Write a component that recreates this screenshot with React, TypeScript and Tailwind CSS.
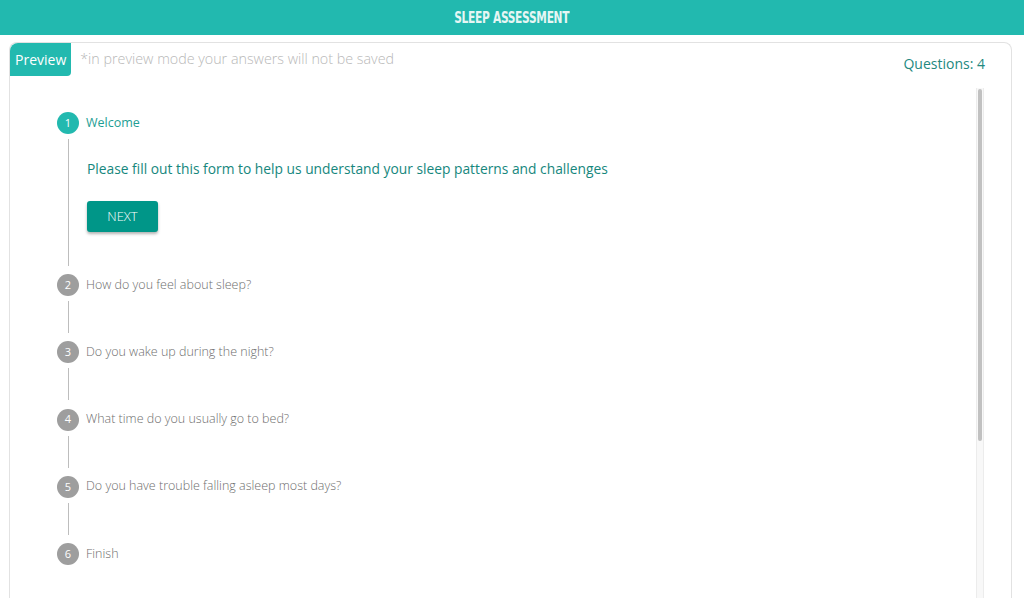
const STEPS = [
  'Welcome',
  'How do you feel about sleep?',
  'Do you wake up during the night?',
  'What time do you usually go to bed?',
  'Do you have trouble falling asleep most days?',
  'Finish',
]

function StepIcon({ n, active }: { n: number; active: boolean }) {
  return (
    <span
      className={`flex h-[22px] w-[22px] shrink-0 items-center justify-center rounded-full text-[11px] text-white ${
        active ? 'bg-[#22b9af]' : 'bg-[#9e9e9e]'
      }`}
    >
      {n}
    </span>
  )
}

export default function App() {
  return (
    <div className="flex h-[598px] flex-col overflow-hidden bg-white font-['Open_Sans',sans-serif]">
      <header className="flex h-[35px] shrink-0 items-center justify-center bg-[#22b9af]">
        <span className="inline-block scale-x-[0.74] font-['DejaVu_Sans_Condensed','DejaVu_Sans',sans-serif] text-[16px] font-bold tracking-tight text-[#e6f6f4]">
          SLEEP ASSESSMENT
        </span>
      </header>

      <div className="ml-[9px] mr-[12px] mt-[7px] flex flex-1 flex-col rounded-t-lg border border-b-0 border-[#e2e2e2]">
        <div className="flex items-start">
          <div className="flex h-[33px] items-center rounded-tl-lg rounded-br bg-[#22b9af] px-[5px] text-[14px] text-white">
            Preview
          </div>
          <span className="ml-[9px] mt-[5px] text-[14.3px] font-light text-[#b8b8b8]">
            *in preview mode your answers will not be saved
          </span>
          <span className="ml-auto mr-[26px] mt-[10px] text-[14px] text-[#23897f]">Questions: 4</span>
        </div>

        <div className="flex flex-1">
          <div className="flex-1 pb-4 pl-[47px] pt-[36px]">
            {STEPS.map((label, i) => {
              const active = i === 0
              const last = i === STEPS.length - 1
              return (
                <div key={label}>
                  <div className="flex items-center gap-[7px]">
                    <StepIcon n={i + 1} active={active} />
                    <span
                      className={`text-[12.5px] ${active ? 'text-[#1e9e94]' : 'font-light text-[#6e6e6e]'}`}
                    >
                      {label}
                    </span>
                  </div>
                  {!last &&
                    (active ? (
                      <div className="mb-[8px] ml-[11px] mt-[5px] border-l border-[#bdbdbd] pb-[34px] pl-[18px] pt-[19px]">
                        <p className="text-[13.8px] leading-[22px] text-[#16877d]">
                          Please fill out this form to help us understand your sleep patterns and challenges
                        </p>
                        <button className="mt-[21px] h-[31px] w-[71px] rounded-[3px] bg-[#009688] text-[13px] font-light text-white shadow-[0_2px_3px_rgba(0,0,0,0.3)]">
                          NEXT
                        </button>
                      </div>
                    ) : (
                      <div className="mb-[8.25px] ml-[11px] mt-[5px] h-[32px] border-l border-[#bdbdbd]" />
                    ))}
                </div>
              )
            })}
          </div>
          <div className="mr-[27px] mt-[12px] flex w-[8px] flex-col border-x border-[#ececec] bg-[#f8f8f8] px-[1px] pt-[1px]">
            <div className="h-[352px] rounded-full bg-[#c1c1c1]" />
          </div>
        </div>
      </div>
    </div>
  )
}
